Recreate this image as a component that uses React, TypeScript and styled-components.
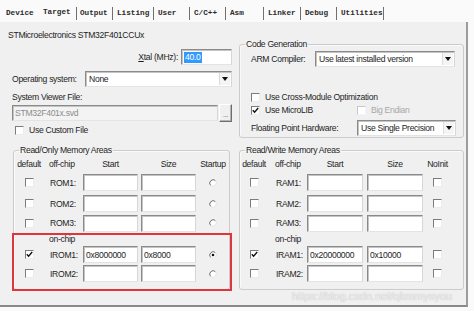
import styled, { createGlobalStyle } from "styled-components";

const FONT = `"Liberation Sans", Arial, sans-serif`;

const GlobalStyle = createGlobalStyle`
  html, body { margin: 0; padding: 0; background: #ffffff; }
  body { font-family: ${FONT}; }
  * { box-sizing: border-box; }
`;

const TABS = [
  { name: "Device", w: 34, pad: 0, sep: false },
  { name: "Target", w: 36, pad: 3, sep: false, active: true },
  { name: "Output", w: 36, pad: 3, sep: true },
  { name: "Listing", w: 41, pad: 4, sep: true },
  { name: "User", w: 36, pad: 4, sep: true },
  { name: "C/C++", w: 36, pad: 4, sep: true },
  { name: "Asm", w: 38, pad: 4, sep: true },
  { name: "Linker", w: 37, pad: 4, sep: true },
  { name: "Debug", w: 36, pad: 4, sep: true },
  { name: "Utilities", w: 48, pad: 4, sep: true, last: true },
];

type Mem = { name: string; start?: string; size?: string; def?: boolean; on?: boolean } | string;

const ROM_ROWS: Mem[] = [
  { name: "ROM1:" },
  { name: "ROM2:" },
  { name: "ROM3:" },
  "on-chip",
  { name: "IROM1:", start: "0x8000000", size: "0x8000", def: true, on: true },
  { name: "IROM2:" },
];

const RAM_ROWS: Mem[] = [
  { name: "RAM1:" },
  { name: "RAM2:" },
  { name: "RAM3:" },
  "on-chip",
  { name: "IRAM1:", start: "0x20000000", size: "0x10000", def: true },
  { name: "IRAM2:" },
];

function CheckBox({ checked, disabled }: { checked?: boolean; disabled?: boolean }) {
  return (
    <Box $disabled={disabled}>
      {checked && (
        <svg width="7" height="7" viewBox="0 0 7 7">
          <path d="M0.8 3.2 L2.6 5.2 L6.2 1" stroke="#111" strokeWidth="1.4" fill="none" />
        </svg>
      )}
    </Box>
  );
}

function Radio({ on }: { on?: boolean }) {
  return (
    <svg width="8" height="8" viewBox="0 0 8 8">
      <circle cx="4" cy="4" r="3.4" fill="#fff" />
      <path d="M6.4 1.6 A3.4 3.4 0 0 0 1.6 6.4" stroke="#6e6e6e" strokeWidth="1" fill="none" />
      <path d="M1.6 6.4 A3.4 3.4 0 0 0 6.4 1.6" stroke="#e2e2e2" strokeWidth="1" fill="none" />
      {on && <circle cx="4" cy="4" r="1.3" fill="#111" />}
    </svg>
  );
}

function Combo({ w, value }: { w: number; value: string }) {
  return (
    <Select $w={w}>
      <span>{value}</span>
      <DropButton>
        <Arrow />
      </DropButton>
    </Select>
  );
}

function MemoryArea(props: {
  title: string;
  cols: string;
  inputW: number;
  indent: number;
  last: string;
  radio?: boolean;
  rows: Mem[];
}) {
  const { title, cols, inputW, indent, last, radio, rows } = props;
  return (
    <Group>
      <Legend>{title}</Legend>
      <MemGrid $cols={cols}>
        <Center>default</Center>
        <Cell $indent={indent - 1}>off-chip</Cell>
        <HeadCell $w={inputW}>Start</HeadCell>
        <HeadCell $w={inputW}>Size</HeadCell>
        <Center>{last}</Center>
        {rows.map((r, i) =>
          typeof r === "string" ? (
            <OnChip key={i} $indent={indent - 1}>
              {r}
            </OnChip>
          ) : (
            <Line key={i}>
              <Center>
                <CheckBox checked={r.def} />
              </Center>
              <Cell $indent={indent}>{r.name}</Cell>
              <Cell>
                <TextBox $w={inputW}>{r.start}</TextBox>
              </Cell>
              <Cell>
                <TextBox $w={inputW}>{r.size}</TextBox>
              </Cell>
              <Center>{radio ? <Radio on={r.on} /> : <CheckBox />}</Center>
            </Line>
          )
        )}
      </MemGrid>
    </Group>
  );
}

export default function App() {
  return (
    <Window>
      <GlobalStyle />
      <TabBar>
        {TABS.map((t) => (
          <Tab key={t.name} $w={t.w} $pad={t.pad} $sep={t.sep} $active={t.active} $last={t.last}>
            {t.name}
          </Tab>
        ))}
      </TabBar>
      <Panel>
        <TopArea>
          <Column>
            <DeviceName>STMicroelectronics STM32F401CCUx</DeviceName>
            <Row $mt={8} $justify="flex-end" $gap={3} $pr={1}>
              <span>
                <u>X</u>tal (MHz):
              </span>
              <TextBox $w={51} $h={16}>
                <Highlight>40.0</Highlight>
              </TextBox>
            </Row>
            <Row $mt={6} $pl={4}>
              <Label $w={73}>Operating system:</Label>
              <Combo w={147} value="None" />
            </Row>
            <Row $mt={5} $pl={4}>
              System Viewer File:
            </Row>
            <Row $mt={1} $pl={4} $gap={1}>
              <TextBox $w={206} $h={16} $disabled>
                STM32F401x.svd
              </TextBox>
              <Browse>...</Browse>
            </Row>
            <Row $mt={3} $pl={7} $gap={5}>
              <CheckBox />
              <span>Use Custom File</span>
            </Row>
          </Column>
          <Column $mt={17}>
            <Group>
              <Legend>Code Generation</Legend>
              <GroupBody>
                <Row $mt={1}>
                  <Label $w={64}>ARM Compiler:</Label>
                  <Combo w={140} value="Use latest installed version" />
                </Row>
                <Row $mt={25} $gap={5}>
                  <CheckBox />
                  <span>Use Cross-Module Optimization</span>
                </Row>
                <Row $mt={2}>
                  <Label $w={106}>
                    <CheckBox checked />
                    <span>Use MicroLIB</span>
                  </Label>
                  <Label $w={80} $muted>
                    <CheckBox disabled />
                    <span>Big Endian</span>
                  </Label>
                </Row>
                <Row $mt={4}>
                  <Label $w={106}>Floating Point Hardware:</Label>
                  <Combo w={99} value="Use Single Precision" />
                </Row>
              </GroupBody>
            </Group>
          </Column>
        </TopArea>
        <BottomArea>
          <MemoryArea
            title="Read/Only Memory Areas"
            cols="30px 39px 58px 56px 32px"
            inputW={55}
            indent={6}
            last="Startup"
            radio
            rows={ROM_ROWS}
          />
          <MemoryArea
            title="Read/Write Memory Areas"
            cols="28px 39px 60px 60px 21px"
            inputW={56}
            indent={8}
            last="NoInit"
            rows={RAM_ROWS}
          />
          <Annotation />
        </BottomArea>
      </Panel>
      <Watermark>https://blog.csdn.net/qkmmysyou</Watermark>
    </Window>
  );
}

const Window = styled.div`
  position: relative;
  width: 474px;
  height: 311px;
  overflow: hidden;
  background: #fafafa;
  font-family: ${FONT};
  font-size: 8.6px;
  letter-spacing: -0.3px;
  color: #1e1e1e;
`;

const TabBar = styled.div`
  display: flex;
  align-items: flex-start;
  height: 22px;
  padding: 7px 0 0 6px;
`;

const Tab = styled.div<{ $w: number; $pad: number; $sep?: boolean; $active?: boolean; $last?: boolean }>`
  width: ${(p) => p.$w}px;
  height: 13px;
  padding-left: ${(p) => p.$pad}px;
  border-left: ${(p) => (p.$sep ? "1px solid #707070" : "none")};
  border-right: ${(p) => (p.$last ? "1px solid #707070" : "none")};
  font-family: "Liberation Mono", "Courier New", monospace;
  font-weight: bold;
  font-size: 7.7px;
  letter-spacing: 0;
  line-height: ${(p) => (p.$active ? 11 : 13)}px;
  color: #2a2a2a;
  white-space: nowrap;
`;

const Panel = styled.div`
  width: 468px;
  height: 285px;
  background: #f0f0f0;
  border-right: 2px solid #9c9c9c;
  border-bottom: 2px solid #8a8a8a;
`;

const TopArea = styled.div`
  display: grid;
  grid-template-columns: 225px 225px;
  column-gap: 6px;
  align-items: start;
  padding-left: 8px;
`;

const Column = styled.div<{ $mt?: number }>`
  display: flex;
  flex-direction: column;
  margin-top: ${(p) => p.$mt ?? 0}px;
`;

const DeviceName = styled.div`
  margin-top: 8px;
  height: 11px;
  line-height: 11px;
  white-space: nowrap;
`;

const Row = styled.div<{ $mt?: number; $pl?: number; $pr?: number; $gap?: number; $justify?: string }>`
  display: flex;
  align-items: center;
  justify-content: ${(p) => p.$justify ?? "flex-start"};
  gap: ${(p) => p.$gap ?? 0}px;
  margin-top: ${(p) => p.$mt ?? 0}px;
  padding-left: ${(p) => p.$pl ?? 0}px;
  padding-right: ${(p) => p.$pr ?? 0}px;
  min-height: 11px;
  line-height: 11px;
  white-space: nowrap;
`;

const Label = styled.div<{ $w: number; $muted?: boolean }>`
  display: flex;
  align-items: center;
  gap: 5px;
  width: ${(p) => p.$w}px;
  flex: none;
  color: ${(p) => (p.$muted ? "#a8a8a8" : "inherit")};
`;

const TextBox = styled.div<{ $w: number; $h?: number; $disabled?: boolean }>`
  display: flex;
  align-items: center;
  width: ${(p) => p.$w}px;
  height: ${(p) => p.$h ?? 17}px;
  padding-left: 2px;
  background: ${(p) => (p.$disabled ? "#f3f3f3" : "#ffffff")};
  color: ${(p) => (p.$disabled ? "#8c8c8c" : "#1e1e1e")};
  border: 1px solid;
  border-color: #8a8a8a #d6d6d6 #e4e4e4 #8a8a8a;
  box-shadow: inset 1px 1px 0 #c4c4c4;
  white-space: nowrap;
  overflow: hidden;
`;

const Highlight = styled.span`
  background: #3399ff;
  color: #ffffff;
  padding: 0 1px;
`;

const Select = styled.div<{ $w: number }>`
  display: flex;
  align-items: center;
  width: ${(p) => p.$w}px;
  height: 16px;
  padding: 0 1px 0 3px;
  background: #ffffff;
  border: 1px solid;
  border-color: #8a8a8a #d6d6d6 #e4e4e4 #8a8a8a;
  box-shadow: inset 1px 1px 0 #c4c4c4;
  white-space: nowrap;
  overflow: hidden;
`;

const DropButton = styled.span`
  margin-left: auto;
  display: flex;
  align-items: center;
  justify-content: center;
  width: 11px;
  height: 12px;
  background: #f4f4f4;
  border-left: 1px solid #dcdcdc;
`;

const Arrow = styled.span`
  width: 0;
  height: 0;
  border-left: 3px solid transparent;
  border-right: 3px solid transparent;
  border-top: 4px solid #111;
`;

const Browse = styled.div`
  width: 13px;
  height: 18px;
  display: flex;
  align-items: flex-end;
  justify-content: center;
  padding-bottom: 3px;
  background: #f0f0f0;
  border: 1px solid;
  border-color: #ffffff #6f6f6f #6f6f6f #ffffff;
  box-shadow: inset -1px -1px 0 #b4b4b4;
  font-size: 7px;
  line-height: 7px;
  color: #555;
`;

const Box = styled.span<{ $disabled?: boolean }>`
  display: inline-flex;
  align-items: center;
  justify-content: center;
  width: 9px;
  height: 9px;
  flex: none;
  background: #ffffff;
  border: 1px solid;
  border-color: ${(p) => (p.$disabled ? "#c8c8c8 #f4f4f4 #f4f4f4 #c8c8c8" : "#7b7b7b #ececec #ececec #7b7b7b")};
`;

const Group = styled.fieldset`
  margin: 0;
  padding: 0;
  min-width: 0;
  border: 1px solid #cbcbcb;
  border-radius: 3px;
  box-shadow: inset 1px 1px 0 #fafafa;
`;

const Legend = styled.legend`
  margin-left: 5px;
  padding: 0 1px;
  height: 11px;
  line-height: 11px;
  white-space: nowrap;
`;

const GroupBody = styled.div`
  display: flex;
  flex-direction: column;
  padding: 0 7px 1px 11px;
`;

const BottomArea = styled.div`
  position: relative;
  display: grid;
  grid-template-columns: 217px 225px;
  column-gap: 9px;
  margin-top: 7px;
  padding-left: 13px;
`;

const MemGrid = styled.div<{ $cols: string }>`
  display: grid;
  grid-template-columns: ${(p) => p.$cols};
  grid-template-rows: 16px 21px 21px 18px 14px 17px 21px;
  align-items: center;
  padding-bottom: 5px;
  white-space: nowrap;
`;

const Line = styled.div`
  display: contents;
`;

const Cell = styled.div<{ $indent?: number }>`
  display: flex;
  align-items: center;
  padding-left: ${(p) => p.$indent ?? 0}px;
`;

const Center = styled.div`
  display: flex;
  align-items: center;
  justify-content: center;
`;

const HeadCell = styled.div<{ $w: number }>`
  width: ${(p) => p.$w}px;
  text-align: center;
`;

const OnChip = styled.div<{ $indent: number }>`
  grid-column: 2 / -1;
  padding-left: ${(p) => p.$indent}px;
`;

const Annotation = styled.div`
  position: absolute;
  left: 12px;
  top: 88px;
  width: 220px;
  height: 58px;
  border: 2px solid #e0353b;
  pointer-events: none;
`;

const Watermark = styled.div`
  position: absolute;
  left: 292px;
  top: 290px;
  font-size: 11px;
  letter-spacing: 0;
  color: rgba(255, 255, 255, 0.75);
  text-shadow: 0 0 1px rgba(120, 120, 120, 0.6);
  white-space: nowrap;
`;
